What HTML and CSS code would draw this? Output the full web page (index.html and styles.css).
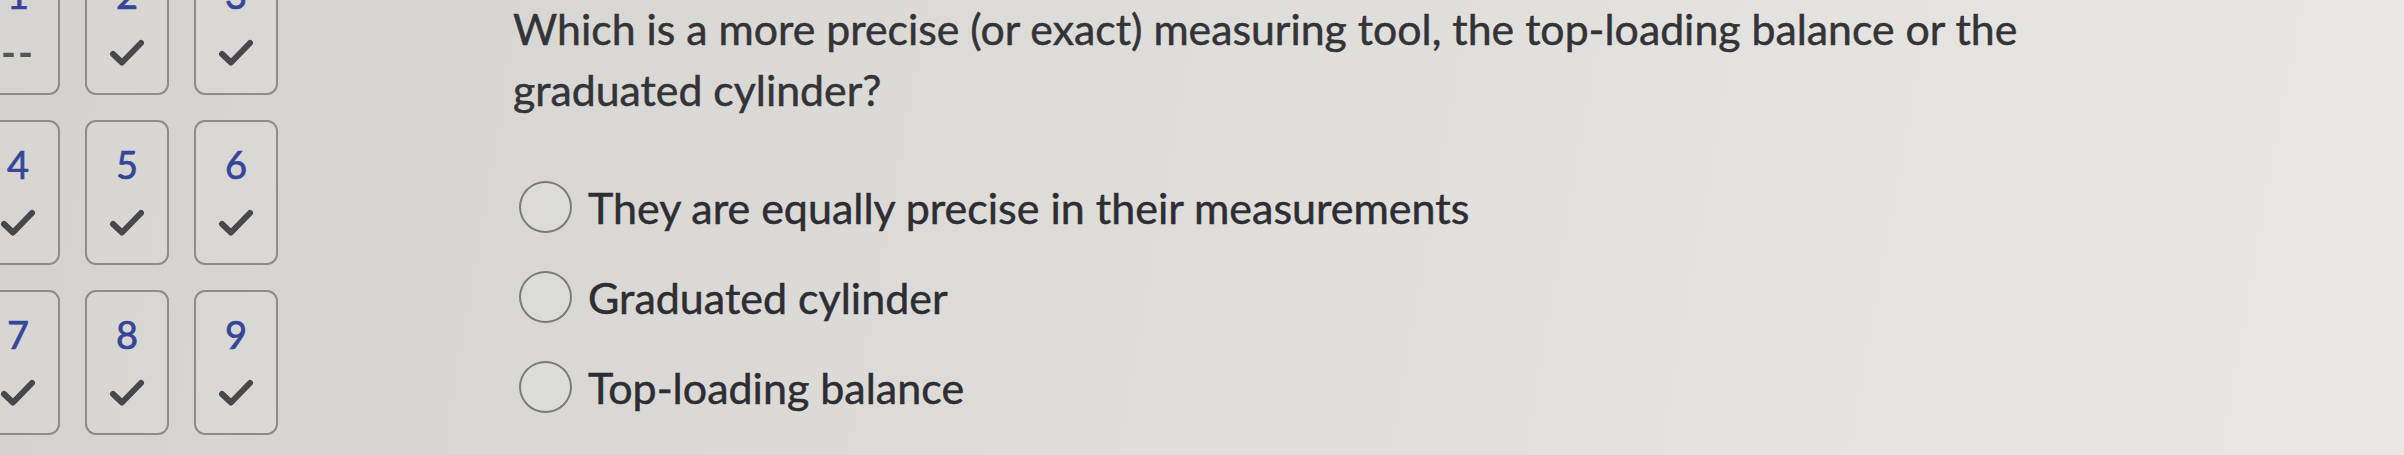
FILE: index.html
```html
<!DOCTYPE html>
<html lang="en">
<head>
<meta charset="utf-8">
<title>Question</title>
<link rel="stylesheet" href="styles.css">
</head>
<body>
<div class="page">
  <nav class="grid">
    <div class="tile"><span class="num">1</span><span class="dash">--</span></div>
    <div class="tile"><span class="num">2</span><svg class="check" viewBox="0 0 36 28"><polyline points="4,15 13,23.5 32,4"/></svg></div>
    <div class="tile"><span class="num">3</span><svg class="check" viewBox="0 0 36 28"><polyline points="4,15 13,23.5 32,4"/></svg></div>
    <div class="tile"><span class="num">4</span><svg class="check" viewBox="0 0 36 28"><polyline points="4,15 13,23.5 32,4"/></svg></div>
    <div class="tile"><span class="num">5</span><svg class="check" viewBox="0 0 36 28"><polyline points="4,15 13,23.5 32,4"/></svg></div>
    <div class="tile"><span class="num">6</span><svg class="check" viewBox="0 0 36 28"><polyline points="4,15 13,23.5 32,4"/></svg></div>
    <div class="tile"><span class="num">7</span><svg class="check" viewBox="0 0 36 28"><polyline points="4,15 13,23.5 32,4"/></svg></div>
    <div class="tile"><span class="num">8</span><svg class="check" viewBox="0 0 36 28"><polyline points="4,15 13,23.5 32,4"/></svg></div>
    <div class="tile"><span class="num">9</span><svg class="check" viewBox="0 0 36 28"><polyline points="4,15 13,23.5 32,4"/></svg></div>
  </nav>
  <main class="question">
    <p class="prompt">Which is a more precise (or exact) measuring tool, the top-loading balance or the graduated cylinder?</p>
    <ul class="options">
      <li class="option"><span class="radio"></span><span class="label">They are equally precise in their measurements</span></li>
      <li class="option"><span class="radio"></span><span class="label">Graduated cylinder</span></li>
      <li class="option"><span class="radio"></span><span class="label">Top-loading balance</span></li>
    </ul>
  </main>
</div>
</body>
</html>
```

FILE: styles.css
```css
html, body {
  margin: 0;
  padding: 0;
}

body {
  width: 2404px;
  height: 455px;
  overflow: hidden;
  font-family: Lato, "Open Sans", "Liberation Sans", sans-serif;
  background: linear-gradient(100deg, #d3d2ce 0%, #dbdad6 35%, #e3e2de 70%, #e8e7e3 100%);
}

.page {
  display: flex;
  align-items: flex-start;
}

.grid {
  display: grid;
  grid-template-columns: repeat(3, 84px);
  grid-auto-rows: 145px;
  gap: 25px;
  margin-left: -24px;
  margin-top: -50px;
  flex: none;
}

.tile {
  box-sizing: border-box;
  border: 2px solid #8c8c8c;
  border-radius: 11px;
  background: rgba(255, 255, 255, 0.08);
  display: flex;
  flex-direction: column;
  align-items: center;
  padding-top: 20px;
}

.num {
  font-size: 38px;
  line-height: 44px;
  color: #35469a;
  -webkit-text-stroke: 0.7px #35469a;
}

.check {
  width: 36px;
  height: 28px;
  margin-top: 23px;
  fill: none;
  stroke: #47474c;
  stroke-width: 6;
  stroke-linecap: round;
  stroke-linejoin: round;
}

.dash {
  margin-top: 22px;
  font-size: 40px;
  line-height: 28px;
  font-weight: 700;
  letter-spacing: 2px;
  color: #55555a;
}

.question {
  margin-left: 235px;
  width: 1580px;
}

.prompt {
  margin: -2px 0 0;
  font-size: 42.8px;
  line-height: 61px;
  color: #333338;
  -webkit-text-stroke: 0.5px #333338;
}

.options {
  list-style: none;
  margin: 42px 0 0 6px;
  padding: 0;
}

.option {
  display: flex;
  align-items: center;
  height: 90px;
}

.radio {
  box-sizing: border-box;
  width: 53px;
  height: 52px;
  border: 2px solid #7b7b7e;
  border-radius: 50%;
  background: rgba(255, 255, 255, 0.1);
  flex: none;
}

.label {
  margin-left: 16px;
  font-size: 43px;
  color: #2d2d33;
  -webkit-text-stroke: 0.5px #2d2d33;
}
```
